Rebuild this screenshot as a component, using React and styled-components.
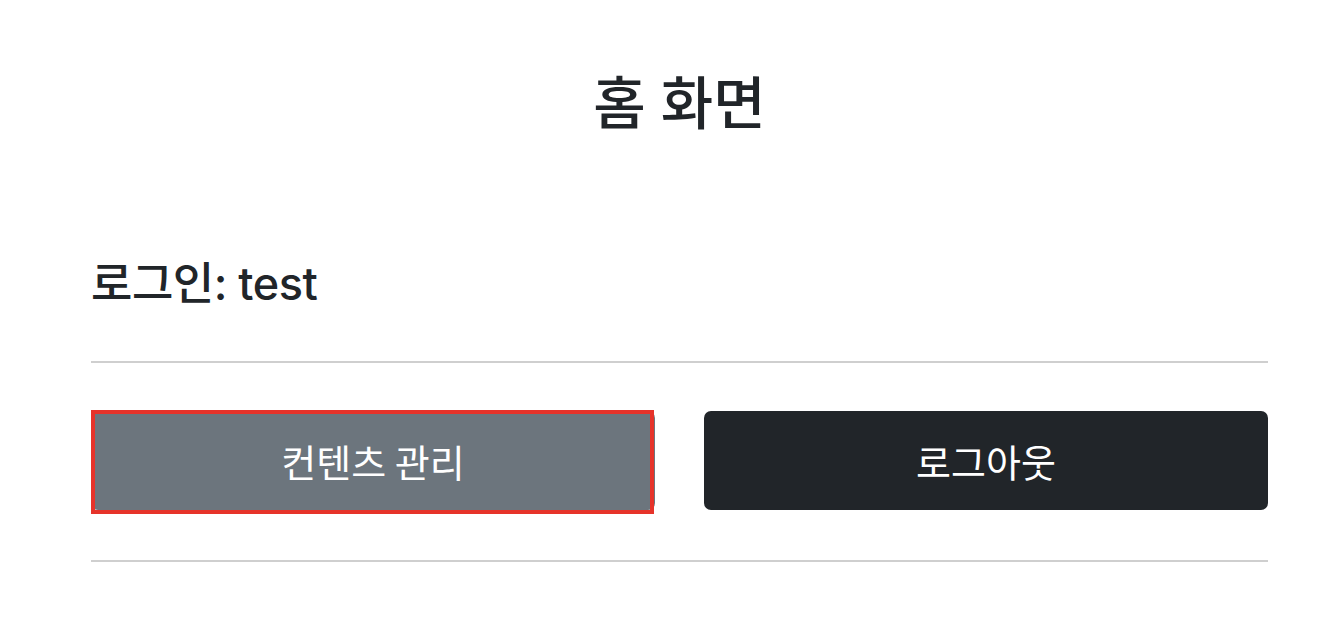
import React from "react";
import styled, { createGlobalStyle } from "styled-components";

const GlobalStyle = createGlobalStyle`
  body {
    margin: 0;
    background: #ffffff;
    color: #212529;
    font-family: "Inter", "Noto Sans CJK KR", sans-serif;
  }
`;

const Page = styled.div`
  width: 1177px;
  margin-left: 91px;
  padding-top: 72px;
`;

const Title = styled.h2`
  margin: 0;
  height: 64px;
  font-size: 57px;
  line-height: 64px;
  font-weight: 500;
  text-align: center;
`;

const UserLine = styled.p`
  margin: 122px 0 0;
  font-size: 45px;
  line-height: 52px;
  font-weight: 500;
  letter-spacing: -0.5px;
`;

const Divider = styled.hr`
  margin: ${(props) => props.top}px 0 0;
  border: 0;
  height: 2px;
  background: #cfcfcf;
`;

const ButtonRow = styled.div`
  display: grid;
  grid-template-columns: 1fr 1fr;
  gap: 49px;
  margin-top: 48px;
`;

const Button = styled.button`
  position: relative;
  height: 99px;
  border: 0;
  border-radius: 7px;
  background: ${(props) => (props.variant === "dark" ? "#212529" : "#6c757d")};
  color: #ffffff;
  font-family: "Noto Sans CJK KR", sans-serif;
  font-size: 38px;
  font-weight: 400;
  cursor: pointer;
  outline: none;

  &::after {
    content: "";
    display: ${(props) => (props.focused ? "block" : "none")};
    position: absolute;
    top: -1px;
    left: 0;
    right: 1px;
    bottom: -4px;
    border: 4px solid #e6332a;
  }
`;

export default function App() {
  return (
    <Page>
      <GlobalStyle />
      <Title>홈 화면</Title>
      <UserLine>로그인: test</UserLine>
      <Divider top={51} />
      <ButtonRow>
        <Button focused>컨텐츠 관리</Button>
        <Button variant="dark">로그아웃</Button>
      </ButtonRow>
      <Divider top={50} />
    </Page>
  );
}
